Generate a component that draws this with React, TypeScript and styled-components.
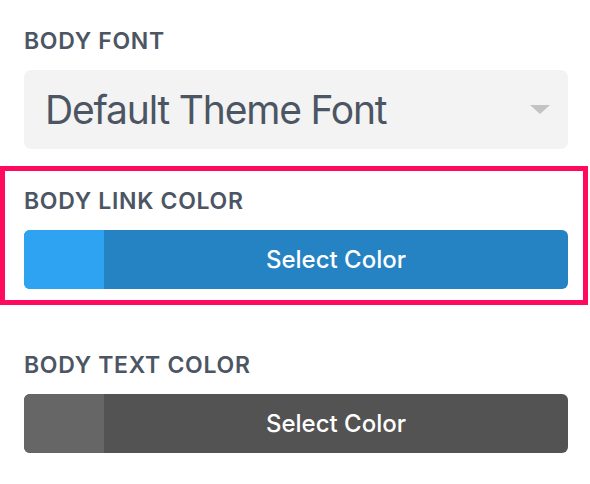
import React from "react";
import styled, { createGlobalStyle } from "styled-components";

const Global = createGlobalStyle`
  html, body { margin: 0; padding: 0; background: #ffffff; }
  body { font-family: Inter, "Helvetica Neue", Arial, sans-serif; -webkit-font-smoothing: antialiased; }
`;

const Page = styled.div`
  width: 590px;
  display: flex;
  flex-direction: column;
`;

const Section = styled.section<{ $highlight?: boolean; $pt: number; $pb: number }>`
  width: 588px;
  box-sizing: border-box;
  border: 5px solid ${(p) => (p.$highlight ? "#ff0a5f" : "transparent")};
  padding: ${(p) => p.$pt}px 15px ${(p) => p.$pb}px 19px;
  display: flex;
  flex-direction: column;
  gap: 16px;
`;

const Label = styled.div`
  font-size: 23px;
  line-height: 26px;
  font-weight: 600;
  color: #4c5563;
  letter-spacing: 0.7px;
`;

const SelectBox = styled.div`
  height: 79px;
  border-radius: 7px;
  background: #f3f3f3;
  display: flex;
  align-items: center;
  justify-content: space-between;
  padding: 0 18px 0 21px;
`;

const SelectText = styled.span`
  font-size: 39px;
  color: #4c5563;
  font-weight: 400;
  letter-spacing: -1.2px;
`;

const Arrow = styled.svg`
  width: 20px;
  height: 10px;
  display: block;
`;

const ColorButton = styled.div<{ $bg: string }>`
  height: 59px;
  border-radius: 6px;
  overflow: hidden;
  display: flex;
  background: ${(p) => p.$bg};
`;

const Swatch = styled.div<{ $color: string }>`
  width: 80px;
  flex: none;
  background: ${(p) => p.$color};
`;

const ButtonText = styled.div`
  flex: 1;
  display: flex;
  align-items: center;
  justify-content: center;
  color: #ffffff;
  font-size: 24px;
  font-weight: 500;
`;

export default function App() {
  return (
    <Page>
      <Global />
      <Section $pt={23} $pb={12}>
        <Label>BODY FONT</Label>
        <SelectBox>
          <SelectText>Default Theme Font</SelectText>
          <Arrow viewBox="0 0 20 10">
            <polygon points="0,0 20,0 10,9" fill="#c3c3c3" />
          </Arrow>
        </SelectBox>
      </Section>
      <Section $highlight $pt={17} $pb={11}>
        <Label>BODY LINK COLOR</Label>
        <ColorButton $bg="#2683c3">
          <Swatch $color="#2ea3f2" />
          <ButtonText>Select Color</ButtonText>
        </ColorButton>
      </Section>
      <Section $pt={42} $pb={20}>
        <Label>BODY TEXT COLOR</Label>
        <ColorButton $bg="#535353">
          <Swatch $color="#666666" />
          <ButtonText>Select Color</ButtonText>
        </ColorButton>
      </Section>
    </Page>
  );
}
